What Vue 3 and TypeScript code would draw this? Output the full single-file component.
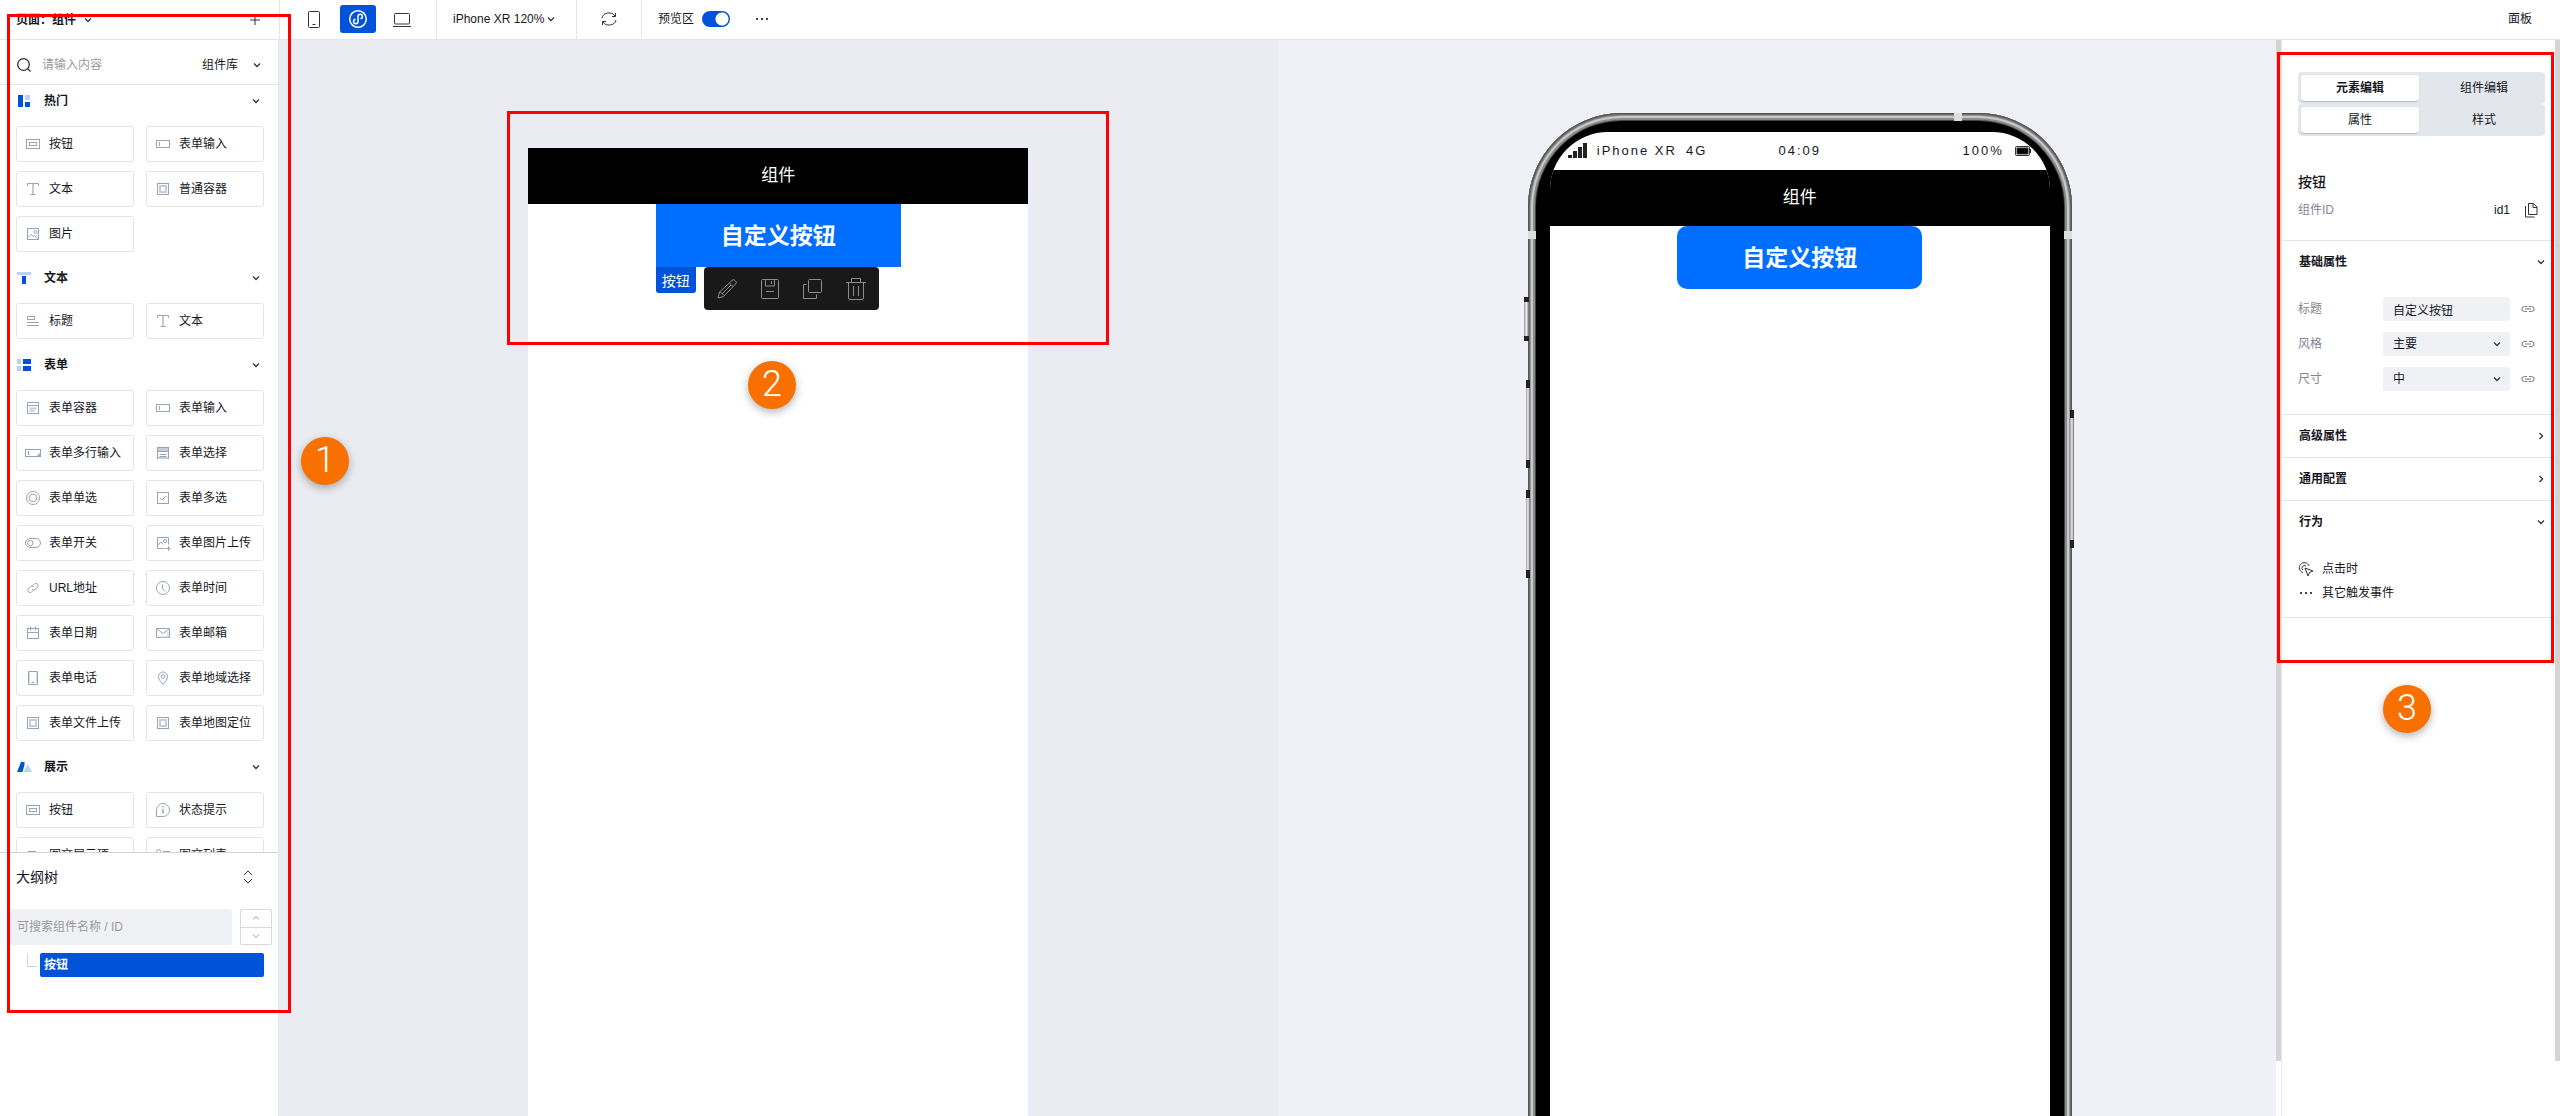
<script setup lang="ts">
import { ref } from 'vue'

interface Item {
  label: string
  icon: string
}
interface Group {
  title: string
  icon: string
  items: Item[]
}

const glyphs: Record<string, string> = {
  button: '<rect x="1.5" y="3.5" width="13" height="9"/><rect x="4.5" y="6.5" width="7" height="3"/>',
  input: '<rect x="1.5" y="4.5" width="13" height="7"/><path d="M4.5 6v4"/>',
  text: '<path d="M2.5 5V2.5h11V5M5.5 13.5h5"/><path d="M8 3v10" stroke="#c3cad6" stroke-width="2"/>',
  box: '<rect x="2.5" y="2.5" width="11" height="11"/><rect x="5" y="5" width="6" height="6" stroke="#c6ccd8" stroke-width="2"/>',
  image: '<rect x="2.5" y="2.5" width="11" height="11"/><circle cx="10.5" cy="6" r="1.5"/><path d="M3 11.500l3-3 2 2 1.500-1 4 3.500"/>',
  title: '<rect x="2.500" y="3.500" width="7" height="3"/><path d="M2 9.500h12M2 12.500h12"/>',
  form: '<rect x="2.500" y="2.500" width="11" height="11"/><path d="M3 5.500h10"/><path d="M4.500 8.500h7" stroke="#c3cad6" stroke-width="2"/><path d="M4.500 11h5"/>',
  area: '<rect x=".500" y="4.500" width="15" height="7"/><path d="M3.500 6v4"/><path d="M15.500 8v3.500H12z" fill="#97a4b8"/>',
  select: '<path d="M2 3h12v3H2zM2 12h12v2H2z" fill="#c6ccd8" stroke="none"/><path d="M2.500 2v12M13.500 2v12M2 2.500h12M3 6.500h10M4.500 9.500h7M4.500 11.500h7"/>',
  radio: '<circle cx="8" cy="8" r="6.500"/><circle cx="8" cy="8" r="3.800"/>',
  check: '<rect x="2.500" y="2.500" width="11" height="11"/><path d="M5 8l2 2 4-4"/>',
  toggle: '<rect x=".500" y="3.500" width="15" height="9" rx="4.500"/><circle cx="5.300" cy="8" r="2.700"/>',
  upload: '<path d="M9.500 13.500h-7v-11h11v7"/><circle cx="10" cy="6" r="1.600"/><path d="M3 10l3-3 2.500 2.500M10.500 13.500h5M13.500 11v5"/>',
  link: '<path d="M7.200 6.200l2.300-2.300a2.300 2.300 0 013.200 3.200L10.400 9.400a2.300 2.300 0 01-3.200 0M8.800 9.800l-2.300 2.300a2.300 2.300 0 01-3.200-3.200L5.600 6.600a2.300 2.300 0 013.200 0"/>',
  clock: '<circle cx="8" cy="8" r="6.500"/><path d="M7.500 4.500v4l2.500 3"/>',
  calendar: '<rect x="2.500" y="3.500" width="11" height="10"/><path d="M2.500 7.500h11M5.500 1.500v4M10.500 1.500v4"/>',
  mail: '<path d="M1.500 3.500h13v9h-13z"/><path d="M13 7v5H3" stroke="#c6ccd8"/><path d="M2 4l6 4.500L14 4"/>',
  phone: '<path d="M3.500 1.500h9v13h-9z"/><path d="M4.500 3v10M11.500 3v10" stroke="#d6dae2"/><path d="M6.500 12.500h3"/>',
  pin: '<path d="M8 14.500C5 11 3.500 9 3.500 6.500a4.500 4.500 0 019 0C12.500 9 11 11 8 14.500z"/><circle cx="8" cy="6.500" r="1.800"/>',
  info: '<path d="M1.500 14.500V8A6.500 6.500 0 118 14.500z"/><path d="M8 7v4.500M8 4v1.500" stroke="#b5bdcb" stroke-width="2"/>',
  card: '<rect x="3.500" y="4.500" width="7" height="7"/><path d="M2 14h12"/>',
  list: '<circle cx="3.500" cy="4.500" r="2"/><path d="M8 4.500h7M8 9.500h7"/>',
  hot: '<path d="M2 2h5v12H2zM9 9h5v5H9z" fill="#0052d9" stroke="none"/><path d="M9 2h5v5H9z" fill="#bbd3fb" stroke="none"/>',
  typo: '<path d="M1 2h14v3H1z" fill="#bbd3fb" stroke="none"/><path d="M6 6h4v8H6z" fill="#0052d9" stroke="none"/>',
  rows: '<path d="M1 2h4v5H1zM1 9h4v5H1z" fill="#bbd3fb" stroke="none"/><path d="M7 2h8v5H7zM7 9h8v5H7z" fill="#0052d9" stroke="none"/>',
  peaks: '<path d="M11.500 5l4.500 8H7.500z" fill="#bbd3fb" stroke="none"/><path d="M5 3h3.500v3L6.500 13H1z" fill="#0052d9" stroke="none"/>',
}

const make = (pairs: string): Item[] =>
  pairs.split(' ').map((pair) => {
    const [label, icon] = pair.split('|')
    return { label, icon }
  })

const groups: Group[] = [
  { title: '热门', icon: 'hot', items: make('按钮|button 表单输入|input 文本|text 普通容器|box 图片|image') },
  { title: '文本', icon: 'typo', items: make('标题|title 文本|text') },
  {
    title: '表单',
    icon: 'rows',
    items: make(
      '表单容器|form 表单输入|input 表单多行输入|area 表单选择|select 表单单选|radio 表单多选|check 表单开关|toggle 表单图片上传|upload URL地址|link 表单时间|clock 表单日期|calendar 表单邮箱|mail 表单电话|phone 表单地域选择|pin 表单文件上传|box 表单地图定位|box',
    ),
  },
  { title: '展示', icon: 'peaks', items: make('按钮|button 状态提示|info 图文展示项|card 图文列表|list') },
]

const preview = ref(true)
const caption = ref('自定义按钮')
</script>

<template>
  <div class="app">
    <header class="topbar">
      <div class="page-pick">
        <button class="plain strong">页面：组件
          <svg class="chev" viewBox="0 0 8 8"><path d="M1 2.500l3 3 3-3" /></svg>
        </button>
        <button class="plain" aria-label="新增">
          <svg class="plus" viewBox="0 0 10 10"><path d="M5 0v10M0 5h10" /></svg>
        </button>
      </div>
      <div class="devices">
        <button class="device" aria-label="手机">
          <svg viewBox="0 0 20 20"><rect x="4.500" y="2.500" width="11" height="16" rx="1" /><path d="M8.500 15.500h3" /></svg>
        </button>
        <button class="device on" aria-label="小程序">
          <svg viewBox="0 0 20 20"><circle cx="10" cy="10" r="8.300" /><path d="M10 12.500a2.200 2.200 0 11-2.500-2.200M10 12.500v-5a2.200 2.200 0 112.500 2.200" /></svg>
        </button>
        <button class="device" aria-label="电脑">
          <svg viewBox="0 0 20 20"><rect x="2.500" y="4.500" width="15" height="10.500" rx="1" /><path d="M1 17.500h18" /></svg>
        </button>
      </div>
      <div class="cell zoom">
        <button class="plain">iPhone XR 120%
          <svg class="chev tight" viewBox="0 0 8 8"><path d="M1 2.500l3 3 3-3" /></svg>
        </button>
      </div>
      <div class="cell refresh">
        <button class="plain" aria-label="刷新">
          <svg class="i16" viewBox="0 0 16 16"><path d="M1 7a7 6 0 0113-2M15 9a7 6 0 01-13 2M14.500 2v3.500H11M1.500 14v-3.500H5" /></svg>
        </button>
      </div>
      <div class="view">
        <label for="preview">预览区</label>
        <input id="preview" v-model="preview" class="switch" type="checkbox" />
        <button class="plain more" aria-label="更多"><i></i><i></i><i></i></button>
      </div>
      <button class="plain board">面板</button>
    </header>

    <main class="body">
      <aside class="side">
        <div class="search">
          <svg class="i16" viewBox="0 0 16 16"><circle cx="7.500" cy="7.500" r="5.800" /><path d="M11.500 11.500l3 3" /></svg>
          <input type="text" placeholder="请输入内容" aria-label="搜索组件" />
          <button class="plain lib">组件库
            <svg class="chev" viewBox="0 0 8 8"><path d="M1 2.500l3 3 3-3" /></svg>
          </button>
        </div>
        <div class="library">
          <section v-for="g in groups" :key="g.title" class="group">
            <h3>
              <svg class="i16" viewBox="0 0 16 16" v-html="glyphs[g.icon]"></svg>
              <span>{{ g.title }}</span>
              <svg class="chev" viewBox="0 0 8 8"><path d="M1 2.500l3 3 3-3" /></svg>
            </h3>
            <div class="items">
              <button v-for="(it, n) in g.items" :key="n" class="item">
                <svg class="i16 soft" viewBox="0 0 16 16" v-html="glyphs[it.icon]"></svg>{{ it.label }}
              </button>
            </div>
          </section>
        </div>
        <div class="outline">
          <h2>大纲树
            <svg class="i16" viewBox="0 0 16 16"><path d="M4 6l4-4 4 4M4 10l4 4 4-4" /></svg>
          </h2>
          <div class="find">
            <input type="text" placeholder="可搜索组件名称 / ID" aria-label="搜索大纲树" />
            <div class="steps">
              <button aria-label="上一个"><svg class="chev" viewBox="0 0 8 8"><path d="M1 5.500l3-3 3 3" /></svg></button>
              <button aria-label="下一个"><svg class="chev" viewBox="0 0 8 8"><path d="M1 2.500l3 3 3-3" /></svg></button>
            </div>
          </div>
          <div class="branch"><span class="elbow"></span><button class="node">按钮</button></div>
        </div>
        <div class="mark mark-side"></div>
      </aside>

      <section class="canvas">
        <div class="artboard">
          <div class="nav">组件</div>
          <div class="stage">
            <button class="custom picked">自定义按钮</button>
            <div class="tools">
              <span class="tag">按钮</span>
              <div class="toolbar">
                <button aria-label="编辑"><svg viewBox="0 0 24 24"><path d="M3 21l1.500-6L17 3.500a2 2 0 013 0l.500.500a2 2 0 010 3L8.500 19.500zM14.500 6l4 4M5 14.500l4 4M16 8L7 17" /></svg></button>
                <button aria-label="保存"><svg viewBox="0 0 24 24"><rect x="3.500" y="2.500" width="17" height="19" rx="1" /><path d="M7.500 3v6h9V3M13.500 4v3M8 14.500h8" /></svg></button>
                <button aria-label="复制"><svg viewBox="0 0 24 24"><rect x="7.500" y="2.500" width="13" height="13" rx="1" /><path d="M5.500 7.500h-3v14h13v-4" /></svg></button>
                <button aria-label="删除"><svg viewBox="0 0 24 24"><path d="M2 5.500h20M7.500 5V1.500h9V5M4.500 6v15a1.500 1.500 0 001.500 1.500h12a1.500 1.500 0 001.500-1.500V6M9.500 9v10M14.500 9v10" /></svg></button>
              </div>
            </div>
          </div>
        </div>
        <div class="mark mark-canvas"></div>
        <span class="dot dot-one">1</span>
        <span class="dot dot-two">2</span>
      </section>

      <section class="preview">
        <div class="phone">
          <i class="key k1"></i><i class="key k2"></i><i class="key k3"></i><i class="key k4"></i>
          <i class="band top"></i><i class="band left"></i><i class="band right"></i>
          <div class="screen">
            <div class="status">
              <svg class="signal" viewBox="0 0 20 16"><path d="M0 12h4v3H0zM5 8h4v7H5zM10 4h4v11h-4zM15 0h4v15h-4z" /></svg>
              <span>iPhone XR</span><span>4G</span>
              <span class="time">04:09</span>
              <span class="full">100%</span>
              <svg class="battery" viewBox="0 0 17 10"><rect x=".500" y=".500" width="14" height="9" rx="1" /><rect class="fill" x="2" y="2" width="11" height="6" /><path d="M15.500 3v4" /></svg>
            </div>
            <div class="nav">组件</div>
            <div class="stage"><button class="custom">自定义按钮</button></div>
          </div>
        </div>
      </section>

      <aside class="panel">
        <div class="rail"></div>
        <div class="props">
          <div class="tabs"><button class="on strong">元素编辑</button><button>组件编辑</button></div>
          <div class="tabs"><button class="on">属性</button><button>样式</button></div>
          <div class="ident">
            <h2>按钮</h2>
            <div class="idrow">
              <span class="dim">组件ID</span><span class="id">id1</span>
              <button class="plain" aria-label="复制ID"><svg class="i16" viewBox="0 0 16 16"><path d="M5.500 1.500h5l3.500 3.500v7.500H5.500zM10 2v3.500h4M2.500 4v11h9" /></svg></button>
            </div>
          </div>
          <section class="block">
            <h3>基础属性<svg class="chev" viewBox="0 0 8 8"><path d="M1 2.500l3 3 3-3" /></svg></h3>
            <div class="fields">
              <div class="field">
                <label for="f-title">标题</label>
                <input id="f-title" v-model="caption" type="text" />
                <svg class="bind" viewBox="0 0 14 8"><path d="M6 1.500H3.500a2.500 2.500 0 000 5H6M8 1.500h2.500a2.500 2.500 0 010 5H8M4 4h6" /></svg>
              </div>
              <div class="field">
                <label for="f-style">风格</label>
                <select id="f-style"><option>主要</option><option>次要</option></select>
                <svg class="bind" viewBox="0 0 14 8"><path d="M6 1.500H3.500a2.500 2.500 0 000 5H6M8 1.500h2.500a2.500 2.500 0 010 5H8M4 4h6" /></svg>
              </div>
              <div class="field">
                <label for="f-size">尺寸</label>
                <select id="f-size"><option>中</option><option>小</option></select>
                <svg class="bind" viewBox="0 0 14 8"><path d="M6 1.500H3.500a2.500 2.500 0 000 5H6M8 1.500h2.500a2.500 2.500 0 010 5H8M4 4h6" /></svg>
              </div>
            </div>
          </section>
          <section class="block"><h3>高级属性<svg class="chev" viewBox="0 0 8 8"><path d="M2.500 1l3 3-3 3" /></svg></h3></section>
          <section class="block"><h3>通用配置<svg class="chev" viewBox="0 0 8 8"><path d="M2.500 1l3 3-3 3" /></svg></h3></section>
          <section class="block">
            <h3>行为<svg class="chev" viewBox="0 0 8 8"><path d="M1 2.500l3 3 3-3" /></svg></h3>
            <div class="events">
              <button class="plain event"><svg class="i16" viewBox="0 0 16 16"><path d="M5 11.500A5 5 0 1111 5M5 9a2.500 2.500 0 113-4M7 7l8 3-3.500 1.500L10 15z" /></svg>点击时</button>
              <button class="plain event"><span class="more"><i></i><i></i><i></i></span>其它触发事件</button>
            </div>
          </section>
        </div>
        <div class="rail end"></div>
        <div class="mark mark-panel"></div>
        <span class="dot dot-three">3</span>
      </aside>
    </main>
  </div>
</template>

<style>
body {
  background: #fff;
  overflow: hidden;
}
</style>

<style scoped>
.app {
  display: flex;
  flex-direction: column;
  height: 100vh;
  overflow: hidden;
  background: #fff;
  color: #16181d;
  font: 12px/20px "Liberation Sans", "Noto Sans CJK SC", sans-serif;
}
.app * {
  box-sizing: border-box;
}
button,
input,
select {
  margin: 0;
  padding: 0;
  border: 0;
  background: none;
  color: inherit;
  font: inherit;
}
h2,
h3 {
  margin: 0;
  font: inherit;
}
svg {
  flex: none;
  fill: none;
  stroke: #333;
  stroke-width: 1;
}
input::placeholder {
  color: #9a9a9a;
  opacity: 1;
}
.plain {
  display: flex;
  align-items: center;
}
.strong {
  font-weight: 700;
}
.chev {
  width: 8px;
  height: 8px;
  stroke-width: 1.300;
}
.i16 {
  width: 16px;
  height: 16px;
}
.topbar {
  display: flex;
  flex: none;
  align-items: stretch;
  height: 40px;
  border-bottom: 1px solid #e4e6ea;
}
.topbar > * {
  padding-bottom: 1px;
}
.page-pick {
  display: flex;
  align-items: center;
  justify-content: space-between;
  width: 280px;
  padding: 0 19px 0 16px;
  border-right: 1px solid #e4e6ea;
}
.page-pick .plain {
  gap: 8px;
}
.plus {
  width: 10px;
  height: 10px;
}
.devices {
  display: flex;
  align-items: center;
  gap: 8px;
  width: 157px;
  padding-left: 16px;
  border-right: 1px solid #e4e6ea;
}
.device {
  display: flex;
  align-items: center;
  justify-content: center;
  width: 36px;
  height: 28px;
  border-radius: 3px;
}
.device svg {
  width: 20px;
  height: 20px;
}
.device.on {
  background: #0052d9;
}
.device.on svg {
  stroke: #fff;
  stroke-width: 1.500;
}
.cell {
  display: flex;
  align-items: center;
  border-right: 1px solid #e4e6ea;
}
.zoom {
  width: 140px;
  padding-left: 16px;
}
.tight {
  margin-left: 3px;
}
.refresh {
  justify-content: center;
  width: 65px;
}
.view {
  display: flex;
  flex: 1;
  align-items: center;
  gap: 8px;
  padding-left: 16px;
}
.switch {
  width: 28px;
  height: 16px;
  border-radius: 8px;
  appearance: none;
  background: radial-gradient(circle at 20px 8px, #fff 6px, #0052d9 7px);
}
.switch:not(:checked) {
  background: radial-gradient(circle at 8px 8px, #fff 6px, #bbb 7px);
}
.more {
  display: flex;
  align-items: center;
  justify-content: center;
  gap: 3px;
  width: 16px;
}
.more i {
  width: 2px;
  height: 2px;
  background: #444;
}
.view .more {
  margin-left: 16px;
}
.board {
  margin-right: 28px;
}
.body {
  display: grid;
  flex: 1;
  grid-template-columns: 279px 1fr 1fr 284px;
  min-height: 0;
}
.side {
  position: relative;
  z-index: 2;
  display: flex;
  flex-direction: column;
  min-height: 0;
  background: #fff;
  border-right: 1px solid #e4e6ea;
}
.search {
  display: flex;
  flex: none;
  align-items: center;
  gap: 10px;
  height: 45px;
  padding: 6px 17px 0 16px;
  border-bottom: 1px solid #e0e2e6;
}
.search input {
  flex: 1;
  min-width: 0;
}
.search .i16 {
  stroke-width: 1.300;
}
.lib {
  gap: 15px;
}
.library {
  flex: 1;
  min-height: 0;
  overflow: hidden;
}
.group {
  padding: 0 14px 10px 16px;
}
.group h3 {
  display: flex;
  align-items: center;
  height: 32px;
  margin-bottom: 9px;
  padding-right: 4px;
  font-weight: 700;
}
.group h3 span {
  flex: 1;
  margin-left: 12px;
}
.items {
  display: grid;
  grid-template-columns: 118px 118px;
  gap: 9px 12px;
}
.item {
  display: flex;
  align-items: center;
  gap: 8px;
  height: 36px;
  padding-left: 8px;
  border: 1px solid #e2e4ea;
  border-radius: 3px;
  white-space: nowrap;
}
.soft {
  stroke: #97a4b8;
}
.outline {
  flex: none;
  height: 264px;
  border-top: 1px solid #d4d5d9;
}
.outline h2 {
  display: flex;
  align-items: center;
  justify-content: space-between;
  height: 48px;
  margin-bottom: 8px;
  padding: 0 22px 0 16px;
  font-size: 14px;
}
.find {
  display: flex;
  gap: 8px;
  padding: 0 6px 0 8px;
}
.find input {
  flex: 1;
  min-width: 0;
  height: 36px;
  padding-left: 9px;
  border-radius: 3px;
  background: #f0f1f5;
}
.steps {
  display: flex;
  flex-direction: column;
  width: 32px;
  height: 36px;
  border: 1px solid #d9d9d9;
  border-radius: 2px;
}
.steps button {
  display: flex;
  flex: 1;
  align-items: center;
  justify-content: center;
}
.steps button + button {
  border-top: 1px solid #d9d9d9;
}
.steps svg {
  stroke: #ccc;
}
.branch {
  display: flex;
  gap: 3px;
  margin-top: 8px;
  padding: 0 14px 0 27px;
}
.elbow {
  width: 10px;
  height: 14px;
  border: solid #d4d4d4;
  border-width: 0 0 1px 1px;
}
.node {
  flex: 1;
  height: 24px;
  padding-left: 4px;
  border-radius: 2px;
  background: #0052d9;
  color: #fff;
  font-weight: 700;
  text-align: left;
}
.mark {
  position: absolute;
  z-index: 5;
  border: 3px solid #f00;
  pointer-events: none;
}
.mark-side {
  top: -26px;
  left: 7px;
  width: 284px;
  height: 999px;
}
.mark-canvas {
  top: 71px;
  left: 228px;
  width: 602px;
  height: 234px;
}
.mark-panel {
  top: 12px;
  left: 1px;
  width: 277px;
  height: 611px;
}
.dot {
  position: absolute;
  z-index: 5;
  width: 48px;
  height: 48px;
  border-radius: 50%;
  background: #f77000;
  box-shadow: 0 3px 8px rgba(0, 0, 0, 0.3);
  color: #fff;
  font: 300 36px/46px Roboto, sans-serif;
  text-align: center;
}
.dot-one {
  top: 397px;
  left: 22px;
}
.dot-two {
  top: 321px;
  left: 469px;
}
.dot-three {
  top: 645px;
  left: 107px;
}
.canvas {
  position: relative;
  display: flex;
  justify-content: center;
  padding-top: 108px;
  background: #ebecf1;
}
.artboard {
  width: 500px;
  background: #fff;
}
.nav {
  height: 56px;
  background: #000;
  color: #fff;
  font-size: 17px;
  line-height: 56px;
  text-align: center;
}
.stage {
  display: flex;
  flex-direction: column;
  align-items: center;
}
.custom {
  width: 245px;
  height: 63px;
  border-radius: 10px;
  background: #006fff;
  color: #fff;
  font-size: 23px;
  font-weight: 700;
}
.picked {
  border-radius: 0;
}
.tools {
  display: flex;
  gap: 8px;
  width: 245px;
}
.tag {
  width: 40px;
  height: 26px;
  border-radius: 0 0 3px 3px;
  background: #0052d9;
  color: #fff;
  font-size: 14px;
  line-height: 28px;
  text-align: center;
}
.toolbar {
  display: flex;
  align-items: center;
  justify-content: center;
  gap: 19px;
  width: 175px;
  height: 43px;
  border-radius: 4px;
  background: #191919;
}
.toolbar button,
.toolbar svg {
  display: block;
  width: 24px;
  height: 24px;
}
.toolbar svg {
  stroke: #8c8c8c;
}
.preview {
  display: flex;
  justify-content: center;
  padding: 73px 0 0 46px;
  background: #f0f1f6;
}
.phone {
  position: relative;
  flex: none;
  width: 544px;
  margin-bottom: -20px;
  padding: 19px 22px 0;
  border-radius: 94px 94px 0 0;
  background: #000;
  box-shadow: inset 0 0 0 1px #555, inset 0 0 0 2px #6c6c6c, inset 0 0 0 3px #999, inset 0 0 0 5px #c9c9c9,
    inset 0 0 0 7px #8c8c8c, inset 0 0 0 8px #444;
}
.screen {
  height: 100%;
  border-radius: 58px 58px 0 0;
  background: #fff;
  overflow: hidden;
}
.band,
.key {
  position: absolute;
  background: #dcded9;
}
.band.top {
  top: 0;
  right: 110px;
  width: 8px;
  height: 8px;
}
.band.left {
  top: 118px;
  left: 0;
  width: 8px;
  height: 8px;
}
.band.right {
  top: 118px;
  right: 0;
  width: 8px;
  height: 8px;
}
.key {
  left: -2px;
  width: 4px;
  border: solid #222;
  border-width: 8px 0;
  background: linear-gradient(90deg, #999, #eee 50%, #666);
}
.key.k1 {
  top: 184px;
  left: -4px;
  width: 5px;
  height: 44px;
  border-width: 5px 0;
}
.key.k2 {
  top: 267px;
  height: 88px;
}
.key.k3 {
  top: 377px;
  height: 88px;
}
.key.k4 {
  top: 297px;
  left: 542px;
  height: 138px;
}
.status {
  position: relative;
  display: flex;
  align-items: center;
  height: 38px;
  padding: 0 18px;
  font-size: 13px;
  letter-spacing: 2px;
}
.signal {
  width: 20px;
  height: 16px;
  margin-right: 9px;
  fill: #222;
  stroke: none;
}
.status span + span {
  margin-left: 9px;
}
.status .time {
  position: absolute;
  left: 0;
  width: 100%;
  margin-left: 0;
  text-align: center;
}
.status .full {
  margin-left: auto;
}
.battery {
  width: 17px;
  height: 10px;
  margin-left: 11px;
}
.battery .fill {
  fill: #000;
}
.panel {
  position: relative;
  display: flex;
  align-items: flex-start;
}
.rail {
  flex: none;
  width: 5px;
  height: 1021px;
  background: #d4d4d4;
}
.props {
  flex: 1;
  min-width: 0;
  height: 100%;
  padding-top: 32px;
  border-left: 1px solid #e8e8e8;
}
.tabs {
  display: flex;
  gap: 4px;
  height: 32px;
  margin: 0 10px 0 16px;
  padding: 3px 0 3px 3px;
  border-radius: 4px;
  background: #e3e6eb;
}
.tabs button {
  flex: 1;
  height: 26px;
  border-radius: 3px;
}
.tabs .on {
  flex: none;
  width: 118px;
  background: #fff;
  box-shadow: 0 1px 1px rgba(0, 0, 0, 0.2);
}
.ident {
  height: 104px;
  padding: 36px 16px 0;
}
.ident h2 {
  height: 20px;
  font-size: 14px;
  font-weight: 500;
}
.idrow {
  display: flex;
  align-items: center;
  margin-top: 8px;
}
.dim,
.field label {
  color: #81858f;
}
.id {
  margin: 0 13px 0 auto;
}
.block {
  border-top: 1px solid #e2e4ea;
}
.block:last-child {
  border-bottom: 1px solid #e2e4ea;
}
.block h3 {
  display: flex;
  align-items: center;
  justify-content: space-between;
  height: 42px;
  padding: 0 10px 0 17px;
  font-weight: 700;
}
.fields {
  display: flex;
  flex-direction: column;
  gap: 11px;
  padding: 14px 20px 23px 16px;
}
.field {
  display: flex;
  align-items: center;
}
.field label {
  width: 85px;
}
.field input,
.field select {
  flex: 1;
  min-width: 0;
  height: 24px;
  margin-right: 11px;
  padding-left: 10px;
  border-radius: 3px;
  background-color: #f0f1f5;
}
.field select {
  appearance: none;
  background-image: url("data:image/svg+xml,%3Csvg xmlns='http://www.w3.org/2000/svg' width='8' height='8'%3E%3Cpath d='M1 2.500l3 3 3-3' fill='none' stroke='%23333' stroke-width='1.300'/%3E%3C/svg%3E");
  background-position: right 9px center;
  background-repeat: no-repeat;
}
.bind {
  width: 14px;
  height: 8px;
  stroke: #777;
}
.events {
  padding: 14px 16px 12px;
}
.event {
  gap: 8px;
  height: 24px;
}
</style>
